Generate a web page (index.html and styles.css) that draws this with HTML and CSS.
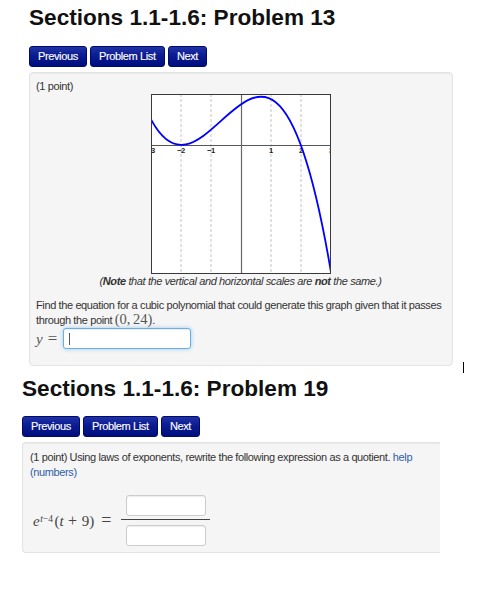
FILE: index.html
```html
<!DOCTYPE html>
<html lang="en">
<head>
<meta charset="utf-8">
<title>Sections 1.1-1.6</title>
<link rel="stylesheet" href="styles.css">
</head>
<body>
<div class="problem p1">
  <h1 class="title">Sections 1.1-1.6: Problem 13</h1>
  <div class="nav">
    <span class="btn">Previous</span>
    <span class="btn">Problem List</span>
    <span class="btn">Next</span>
  </div>
  <div class="well w1">
    <div class="points">(1 point)</div>
    <div class="graph">
      <svg class="plot" width="180" height="180" viewBox="0 0 180 180">
        <defs><clipPath id="pc"><rect x="0" y="0" width="180" height="180"/></clipPath></defs>
        <rect x="0" y="0" width="180" height="180" fill="#fff"/>
        <g stroke="#c4c4c4" stroke-width="1" stroke-dasharray="3 2">
          <line x1="30" y1="0" x2="30" y2="180"/>
          <line x1="60" y1="0" x2="60" y2="180"/>
          <line x1="120" y1="0" x2="120" y2="180"/>
          <line x1="150" y1="0" x2="150" y2="180"/>
        </g>
        <line x1="0" y1="51.5" x2="180" y2="51.5" stroke="#555" stroke-width="1"/>
        <line x1="90.5" y1="0" x2="90.5" y2="180" stroke="#666" stroke-width="1.2"/>
        <g class="ticks" font-family="Liberation Sans, Arial, sans-serif" font-size="7.5" font-weight="bold" fill="#222" text-anchor="middle">
          <text x="0" y="59">−3</text>
          <text x="30" y="59">−2</text>
          <text x="60" y="59">−1</text>
          <text x="120" y="59">1</text>
          <text x="150" y="59">2</text>
          <text x="180" y="59">3</text>
        </g>
        <path d="M0 25.47 C60 137.6 120 -178.2 180 178.35" fill="none" stroke="#0000ff" stroke-width="1.8" clip-path="url(#pc)"/>
        <rect x="0.5" y="0.5" width="179" height="179" fill="none" stroke="#3a3a3a" stroke-width="1"/>
      </svg>
    </div>
    <div class="note">(<b>Note</b> that the vertical and horizontal scales are <b>not</b> the same.)</div>
    <p class="text">Find the equation for a cubic polynomial that could generate this graph given that it passes through the point <span class="math pt">(0,<span class="thin"></span>24)</span>.</p>
    <div class="answer">
      <span class="math mvar">y</span><span class="math meq">=</span>
      <div class="input focus"><span class="caret"></span></div>
    </div>
  </div>
</div>
<span class="stray"></span>
<div class="problem p2">
  <h1 class="title">Sections 1.1-1.6: Problem 19</h1>
  <div class="nav">
    <span class="btn">Previous</span>
    <span class="btn">Problem List</span>
    <span class="btn">Next</span>
  </div>
  <div class="well w2">
    <p class="text first">(1 point) Using laws of exponents, rewrite the following expression as a quotient. <a class="help">help (numbers)</a></p>
    <div class="qrow">
      <span class="math mexp"><i>e</i><sup><i>t</i>−4</sup>(<i>t</i><span class="op">+</span>9)<span class="op eq">=</span></span>
      <span class="frac">
        <span class="input small"></span>
        <span class="bar"></span>
        <span class="input small"></span>
      </span>
    </div>
  </div>
</div>
</body>
</html>
```
FILE: styles.css
```css
html, body {
  margin: 0;
  padding: 0;
  background: #fff;
}

body {
  position: relative;
  width: 486px;
  min-height: 615px;
  font-family: "Liberation Sans", Arial, sans-serif;
  color: #333;
}

.problem {
  display: flex;
  flex-direction: column;
  align-items: flex-start;
}

.p1 {
  margin-left: 29px;
}

.p2 {
  margin-left: 22px;
  margin-top: 4.3px;
}

.title {
  margin: 5px 0 14.5px;
  font-size: 22.6px;
  line-height: 26px;
  font-weight: bold;
  color: #111;
}

.nav {
  display: flex;
  gap: 3.3px;
}

.btn {
  display: block;
  padding: 3px 8px;
  border: 1px solid #000a6a;
  border-radius: 3px;
  font-size: 11px;
  line-height: 13.3px;
  letter-spacing: -0.38px;
  color: #fff;
  background: linear-gradient(to bottom, #1f33a6 0%, #0b1b91 45%, #000e7c 100%);
  -webkit-text-stroke: 0.15px #fff;
}

.well {
  box-sizing: border-box;
  margin-top: 5px;
  background: #f5f5f5;
  border: 1px solid #e3e3e3;
  border-radius: 4px;
  box-shadow: inset 0 1px 1px rgba(0, 0, 0, 0.05);
  font-size: 11px;
  line-height: 14.5px;
  letter-spacing: -0.38px;
}

.w1 {
  width: 424px;
  padding: 6.5px 7px 16px 6px;
}

.w2 {
  width: 418px;
  padding: 7px 7px 6px 7px;
  border-right: 0;
  border-radius: 4px 0 0 4px;
}

.graph {
  display: flex;
  justify-content: center;
}

.plot {
  display: block;
}

.note {
  text-align: center;
  font-style: italic;
}

.text {
  margin: 10px 0 0;
}

.text.first {
  margin: 0;
}

.math {
  font-family: "Liberation Serif", "Times New Roman", serif;
  letter-spacing: 0;
  color: #555;
}

.pt {
  font-size: 14.5px;
  line-height: 12px;
}

.thin {
  display: inline-block;
  width: 2.5px;
}

.answer {
  display: flex;
  align-items: center;
  margin-top: 1px;
}

.mvar {
  font-style: italic;
  font-size: 15px;
  line-height: 16px;
}

.meq {
  font-size: 17px;
  line-height: 16px;
  margin: 0 6px 0 5px;
}

.input {
  box-sizing: border-box;
  display: block;
  width: 128px;
  height: 21px;
  background: #fff;
  border: 1px solid #ccc;
  border-radius: 3px;
  box-shadow: inset 0 1px 1px rgba(0, 0, 0, 0.075);
}

.focus {
  display: flex;
  align-items: center;
  padding-left: 5px;
  border-color: #66afe9;
  box-shadow: inset 0 1px 1px rgba(0, 0, 0, 0.075), 0 0 4px rgba(102, 175, 233, 0.6);
}

.caret {
  width: 1px;
  height: 12px;
  background: #555;
}

.stray {
  position: absolute;
  left: 463px;
  top: 362px;
  width: 1px;
  height: 11px;
  background: #000;
}

.help {
  color: #2f5ea8;
  text-decoration: none;
}

.qrow {
  display: flex;
  align-items: center;
  margin-top: 15.3px;
  padding-left: 3px;
}

.mexp {
  font-size: 15px;
  line-height: 16px;
  color: #444;
  white-space: nowrap;
}

.mexp sup {
  font-size: 9.5px;
  line-height: 0;
  vertical-align: 4px;
  margin: 0 1.5px 0 0.5px;
}

.op {
  margin: 0 4.5px;
  font-size: 16px;
}

.op.eq {
  margin: 0 0 0 7px;
  font-size: 18px;
}

.frac {
  display: flex;
  flex-direction: column;
  align-items: center;
  margin-left: 10px;
  padding: 0;
}

.input.small {
  width: 80px;
  height: 21px;
}

.bar {
  display: block;
  width: 89px;
  height: 1px;
  margin: 3.5px 0 5px;
  background: #444;
}
```
